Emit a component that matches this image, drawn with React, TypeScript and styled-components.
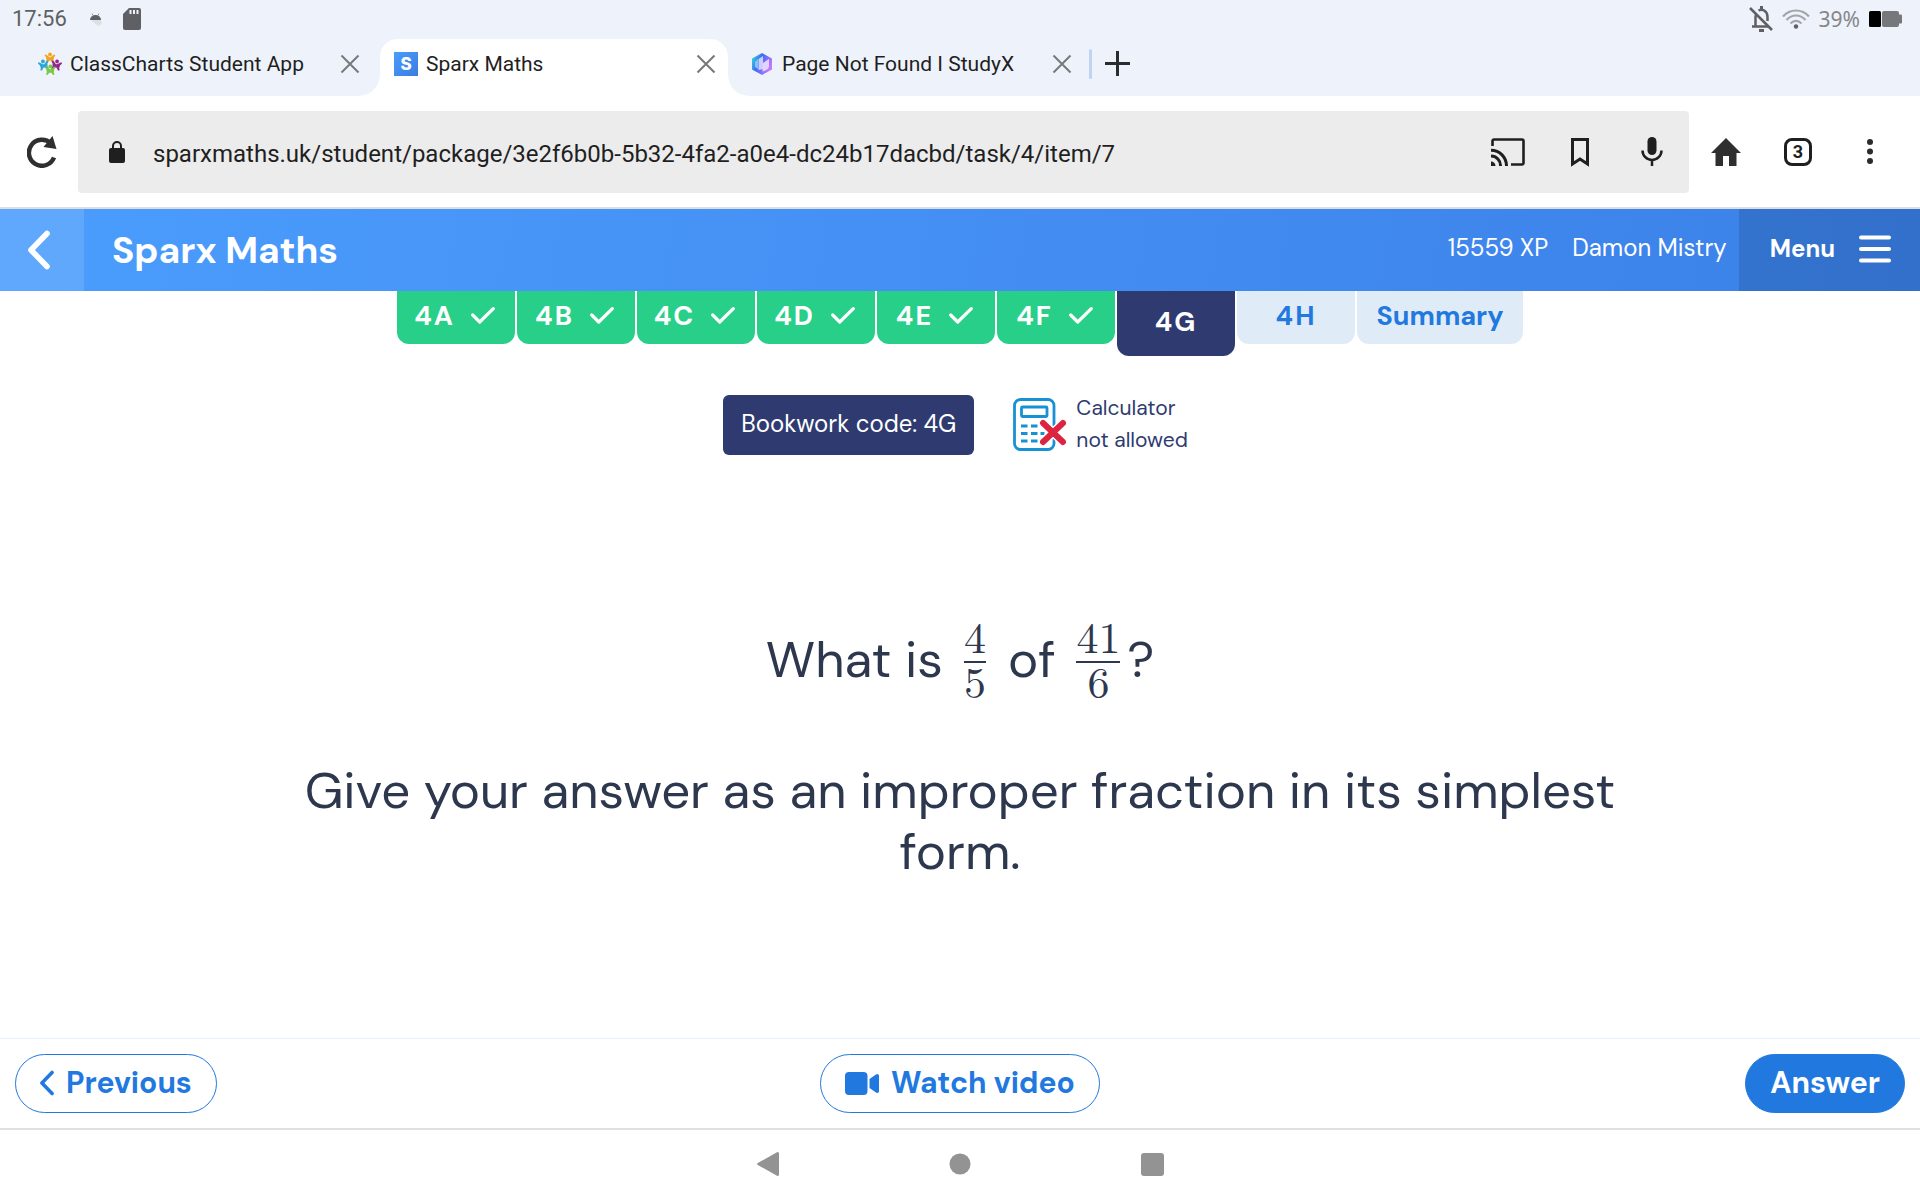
import React from "react";
import styled, { createGlobalStyle, css } from "styled-components";

const Global = createGlobalStyle`
  *, *::before, *::after { box-sizing: border-box; }
  body { margin: 0; background: #fff; }
  button, a, input { font: inherit; color: inherit; }
  button { border: 0; padding: 0; background: none; cursor: pointer; }
  a { text-decoration: none; }
  svg { display: block; flex: none; }
`;

const chromeFont = `Roboto, "Liberation Sans", sans-serif`;
const pageFont = `"DM Sans", Inter, "Liberation Sans", sans-serif`;

const Screen = styled.div`
  min-height: 100vh;
  display: flex;
  flex-direction: column;
  font-family: ${pageFont};
  color: #2d384e;
`;

/* ---------- system status and browser tabs ---------- */

const TopArea = styled.div`
  background: #eef3fb;
  font-family: ${chromeFont};
`;

const StatusBar = styled.div`
  height: 39px;
  display: flex;
  align-items: center;
  justify-content: space-between;
  padding: 0 18px 2px 12px;
  font-size: 22px;
  line-height: 24px;
  color: #5f6063;
`;

const StatusGroup = styled.div<{ $gap: number }>`
  display: flex;
  align-items: center;
  gap: ${(p) => p.$gap}px;
`;

const Percent = styled.span`
  font-family: "Noto Sans", sans-serif;
  font-size: 21px;
  color: #85868a;
`;

const TabStrip = styled.div`
  display: flex;
  height: 57px;
  padding-left: 24px;
`;

const TabList = styled.div`
  display: flex;
  gap: 8px;
`;

const BrowserTab = styled.div<{ $active?: boolean }>`
  position: relative;
  display: flex;
  align-items: center;
  gap: 8px;
  width: 348px;
  padding: 0 12px 8px 14px;
  font-size: 21px;
  line-height: 28px;
  color: #1f1f1f;
  ${(p) =>
    p.$active &&
    css`
      background: #fff;
      border-radius: 18px 18px 0 0;
      &::before,
      &::after {
        content: "";
        position: absolute;
        bottom: 0;
        width: 20px;
        height: 20px;
      }
      &::before {
        left: -20px;
        background: radial-gradient(circle at 0 0, transparent 19px, #fff 20px);
      }
      &::after {
        right: -20px;
        background: radial-gradient(circle at 100% 0, transparent 19px, #fff 20px);
      }
    `}
`;

const TabTitle = styled.button`
  flex: 1;
  text-align: left;
  white-space: nowrap;
`;

const NewTab = styled.div`
  display: flex;
  align-items: center;
  gap: 13px;
  padding: 0 0 8px 5px;
`;

const Divider = styled.span`
  width: 3px;
  height: 30px;
  border-radius: 2px;
  background: #bfd3f2;
`;

/* ---------- address bar ---------- */

const Toolbar = styled.div`
  display: flex;
  align-items: center;
  height: 113px;
  padding: 0 33px 0 27px;
  border-bottom: 2px solid #dedede;
  font-family: ${chromeFont};
  color: #1f1f1f;
`;

const AddressBox = styled.label`
  flex: 1;
  display: flex;
  align-items: center;
  height: 82px;
  margin: 0 20px 0 21px;
  padding: 0 20px 0 28px;
  border-radius: 4px;
  background: #ececec;
`;

const Address = styled.input`
  flex: 1;
  min-width: 0;
  margin-left: 23px;
  border: 0;
  outline: 0;
  padding: 4px 0 0;
  background: none;
  font-size: 24px;
  line-height: 32px;
`;

const IconRow = styled.div`
  display: flex;
  align-items: center;
  gap: 38px;
`;

const IconButton = styled.button`
  display: grid;
  place-items: center;
  width: 34px;
  height: 34px;
`;

const TabCount = styled.span`
  width: 28px;
  height: 28px;
  display: grid;
  place-items: center;
  border: 3px solid #1f1f1f;
  border-radius: 8px;
  font-size: 18px;
  line-height: 22px;
  font-weight: 700;
`;

/* ---------- site header ---------- */

const Header = styled.header`
  display: flex;
  align-items: stretch;
  height: 82px;
  background: linear-gradient(100deg, #4a9dfd 0%, #4590f4 45%, #3a80e8 100%);
  color: #fff;
`;

const BackButton = styled.button`
  width: 84px;
  display: grid;
  place-items: center;
  padding-right: 6px;
  background: rgba(255, 255, 255, 0.12);
`;

const Brand = styled.a`
  flex: 1;
  align-self: center;
  padding-left: 28px;
  font-size: 37px;
  line-height: 48px;
  font-weight: 700;
`;

const UserInfo = styled.div`
  display: flex;
  align-items: center;
  gap: 24px;
  padding: 0 12px 4px 0;
  font-size: 24px;
  line-height: 32px;
`;

const MenuButton = styled.button`
  display: flex;
  align-items: center;
  gap: 24px;
  padding: 0 29px 3px 31px;
  background: rgba(0, 0, 0, 0.12);
  font-size: 24px;
  line-height: 32px;
  font-weight: 700;
`;

/* ---------- task ---------- */

const TaskTabs = styled.nav`
  display: flex;
  justify-content: center;
  align-items: flex-start;
  gap: 2px;
`;

const tones = {
  done: css`background: #28cf89; color: #fff; padding-right: 3px;`,
  current: css`background: #2f3b70; color: #fff; height: 65px;`,
  todo: css`background: #dfebf7; color: #2179df;`,
};

const TaskTab = styled.button<{ $tone: keyof typeof tones; $wide?: boolean }>`
  display: flex;
  align-items: center;
  justify-content: center;
  gap: 16px;
  width: ${(p) => (p.$wide ? 166 : 118)}px;
  height: 53px;
  padding-bottom: 4px;
  border-radius: 0 0 12px 12px;
  font-size: 27px;
  line-height: 32px;
  font-weight: 700;
  letter-spacing: ${(p) => (p.$wide ? 0 : 2)}px;
  ${(p) => tones[p.$tone]}
`;

const TaskInfo = styled.div`
  display: flex;
  justify-content: center;
  align-items: center;
  gap: 39px;
  height: 60px;
  margin-top: 39px;
  padding-right: 9px;
`;

const Bookwork = styled.div`
  display: flex;
  align-items: center;
  height: 60px;
  padding: 0 18px 2px;
  border-radius: 6px;
  background: #2f3b70;
  color: #fff;
  font-size: 24px;
  line-height: 32px;
`;

const Calculator = styled.div`
  display: flex;
  align-items: center;
  gap: 10px;
  padding-bottom: 2px;
  color: #2f3b70;
  font-size: 21px;
  line-height: 32px;
`;

const Question = styled.main`
  flex: 1;
  display: flex;
  flex-direction: column;
  align-items: center;
  justify-content: center;
  gap: 58px;
  padding-top: 6px;
  text-align: center;
  font-size: 51px;
  line-height: 61px;
`;

const Prompt = styled.p`
  max-width: 1400px;
  margin: 0;
`;

const PromptRow = styled(Prompt)`
  display: flex;
  align-items: center;
`;

const Fraction = styled.span<{ $after: number }>`
  display: inline-flex;
  flex-direction: column;
  align-items: center;
  margin: 0 ${(p) => p.$after}px 6px 21px;
  font-family: KaTeX_Main, "Latin Modern Roman", "CMU Serif", "Liberation Serif", serif;
  font-size: 44px;
  line-height: 33px;
`;

const Numerator = styled.span`
  padding-bottom: 10px;
  border-bottom: 2px solid currentColor;
`;

/* ---------- footer ---------- */

const ActionBar = styled.footer`
  display: grid;
  grid-template-columns: 1fr auto 1fr;
  align-items: center;
  height: 92px;
  padding: 0 15px;
  border-top: 1px solid #e6f1fb;
  border-bottom: 2px solid #e0e0e0;
`;

const Action = styled.button<{ $primary?: boolean; $end?: boolean }>`
  display: flex;
  align-items: center;
  gap: 12px;
  height: 59px;
  padding: 0 24px 2px;
  justify-self: ${(p) => (p.$end ? "end" : "start")};
  border: 1px solid #2179df;
  border-radius: 30px;
  background: ${(p) => (p.$primary ? "#2179df" : "#fff")};
  color: ${(p) => (p.$primary ? "#fff" : "#2179df")};
  font-size: 30px;
  line-height: 40px;
  font-weight: 700;
`;

const SystemNav = styled.div`
  display: flex;
  align-items: center;
  justify-content: center;
  gap: 170px;
  height: 70px;
  padding-bottom: 2px;
  color: #939393;
`;

/* ---------- icons ---------- */

const CloseIcon = () => (
  <svg width="20" height="20" viewBox="0 0 20 20" stroke="#77787a" strokeWidth="2">
    <path d="M1.5 1.5l17 17M18.5 1.5l-17 17" />
  </svg>
);

const people: [number, number, number, string][] = [
  [12, 5, 0, "#f6a21d"],
  [5.5, 12, -12, "#2fa4d9"],
  [18.5, 12, 12, "#93278f"],
  [12.3, 17, 0, "#7ac943"],
];

const ClassChartsIcon = () => (
  <svg width="24" height="24" viewBox="0 0 24 24">
    {people.map(([x, y, r, c]) => (
      <g key={c} transform={`translate(${x} ${y}) rotate(${r})`} stroke={c} fill={c} strokeLinecap="round">
        <circle cx="0" cy="-2.6" r="1.9" stroke="none" />
        <path d="M-4.200 -1.500L-1 1.200v1L-3.200 5M4.200 -1.500L1 1.200v1L3.200 5M-1 1.200h2v1.500h-2z" strokeWidth="2" />
      </g>
    ))}
  </svg>
);

const SparxIcon = () => (
  <svg width="24" height="24" viewBox="0 0 24 24">
    <defs>
      <linearGradient id="sparx" x1="0" y1="0" x2="1" y2="1">
        <stop stopColor="#4a9dfd" />
        <stop offset="1" stopColor="#3a7ce0" />
      </linearGradient>
    </defs>
    <rect width="24" height="24" fill="url(#sparx)" />
    <text x="12" y="18" textAnchor="middle" fontFamily="Inter, sans-serif" fontWeight="800" fontSize="17" fill="#fff">S</text>
  </svg>
);

const StudyXIcon = () => (
  <svg width="24" height="22" viewBox="-2 0 24 22">
    <defs>
      <linearGradient id="hex" x1="0" y1="0" x2="1" y2="0.5">
        <stop stopColor="#2df0d0" />
        <stop offset="0.45" stopColor="#3f6bf5" />
        <stop offset="1" stopColor="#c07bff" />
      </linearGradient>
    </defs>
    <path d="M10 0l10 5.5v11L10 22 0 16.5v-11z" fill="url(#hex)" />
    <path d="M3 9l3-3v10l-3-2z" fill="#9fd0ff" opacity=".8" />
    <path d="M6.500 6L11 3v13l-4.500 1z" fill="#d5dcff" opacity=".9" />
    <path d="M11 10l6-4v7c0 3-3 4.500-6.500 5.500z" fill="#e9d8ff" opacity=".95" />
  </svg>
);

const PlusIcon = () => (
  <svg width="25" height="25" viewBox="0 0 25 25" stroke="#2b2c2e" strokeWidth="3">
    <path d="M12.5 0v25M0 12.5h25" />
  </svg>
);

const AndroidIcon = () => (
  <svg width="16" height="16" viewBox="0 0 16 16">
    <path d="M4 9l7 6 4-2-1.500-5z" fill="#dcdfe5" />
    <path d="M3 9a5.500 5 0 0 1 11 0z" fill="#5f6063" />
    <path d="M5 2.500l1 2M12 2.500l-1 2" stroke="#8f9196" />
  </svg>
);

const SdIcon = () => (
  <svg width="18" height="22" viewBox="0 0 18 22">
    <path d="M6 0h10a2 2 0 0 1 2 2v18a2 2 0 0 1-2 2H2a2 2 0 0 1-2-2V6z" fill="#5f6063" />
    <path d="M7.500 2v4M11 2v4M14.500 2v4" stroke="#eef3fb" strokeWidth="2" />
  </svg>
);

const BellOffIcon = () => (
  <svg width="24" height="26" viewBox="0 0 24 26" fill="none" stroke="#5f6063" strokeWidth="2.5">
    <path d="M1 2l22 22" />
    <path d="M3 20.500h16M6.500 20V11a6 6 0 0 1 1-3M9.500 4.500c4-2 9 .5 9 6.500v4" />
    <path d="M12.500 0v4M10 24.500h5" strokeWidth="3" />
  </svg>
);

const WifiIcon = () => (
  <svg width="28" height="20" viewBox="0 0 28 20" fill="none" stroke="#a3a5a9" strokeWidth="2.2">
    <path d="M1 7.500C8-.5 20-.5 27 7.500M4.500 11c5.500-6 13.500-6 19 0M8.500 14.500c3.500-3.500 7.500-3.500 11 0" />
    <circle cx="14" cy="17.5" r="2.2" fill="#5f6063" stroke="none" />
  </svg>
);

const BatteryIcon = () => (
  <svg width="33" height="16" viewBox="0 0 33 16">
    <rect x="13" width="17" height="16" rx="2" fill="#77787b" />
    <rect x="29" y="3.5" width="4" height="9" rx="1" fill="#77787b" />
    <rect width="12" height="16" rx="1.5" fill="#000" />
  </svg>
);

const ReloadIcon = () => (
  <svg width="30" height="32" viewBox="0 0 30 32">
    <path d="M27 21.500A13 13 0 1 1 24 7.500" fill="none" stroke="#2f2f2f" strokeWidth="4.5" />
    <path d="M25.500 0l4 13-13-2z" fill="#2f2f2f" />
  </svg>
);

const LockIcon = () => (
  <svg width="24" height="24" viewBox="0 0 24 24">
    <rect x="3" y="8" width="16" height="15" rx="2" fill="#1f1f1f" />
    <path d="M7 9V6a4 4 0 0 1 8 0v3" fill="none" stroke="#1f1f1f" strokeWidth="2" />
  </svg>
);

const CastIcon = () => (
  <svg width="34" height="28" viewBox="0 0 34 28" fill="none" stroke="#1f1f1f" strokeWidth="2.6">
    <path d="M1.500 8V3a1.500 1.500 0 0 1 1.500-1.500h28A1.500 1.500 0 0 1 32.500 3v22a1.500 1.500 0 0 1-1.500 1.500H20" />
    <path d="M0 12.300A15.500 15.500 0 0 1 15.500 28M0 18a9.500 9.500 0 0 1 9.500 10" strokeWidth="3" />
    <path d="M0 23.500a4.500 4.500 0 0 1 4.500 4.500H0z" fill="#1f1f1f" stroke="none" />
  </svg>
);

const BookmarkIcon = () => (
  <svg width="18" height="30" viewBox="0 0 18 30">
    <path d="M1.500 2.500h15v24.500L9 22l-7.500 5z" fill="none" stroke="#1f1f1f" strokeWidth="3" />
  </svg>
);

const MicIcon = () => (
  <svg width="22" height="29" viewBox="0 0 22 29" fill="none" stroke="#1f1f1f" strokeWidth="2.5">
    <rect x="6.500" y="0" width="9" height="18" rx="4.5" fill="#1f1f1f" stroke="none" />
    <path d="M1.500 13.500a9.500 9.500 0 0 0 19 0M11 23v6" />
  </svg>
);

const HomeIcon = () => (
  <svg width="30" height="28" viewBox="0 0 30 28">
    <path d="M15 0l15 15h-4.500v13H18V18h-6v10H4.500V15H0z" fill="#2f2f2f" />
  </svg>
);

const DotsIcon = () => (
  <svg width="6" height="25" viewBox="0 0 6 25" fill="#2b2b2b">
    <circle cx="3" cy="3" r="3" />
    <circle cx="3" cy="12.5" r="3" />
    <circle cx="3" cy="22" r="3" />
  </svg>
);

const Chevron = ({ width, height }: { width: number; height: number }) => (
  <svg width={width} height={height} viewBox="1 0 22 40" fill="none" stroke="currentColor" strokeWidth="5.6" strokeLinecap="round" strokeLinejoin="round">
    <path d="M20 3.500L4 20l16 16.500" />
  </svg>
);

const BurgerIcon = () => (
  <svg width="32" height="28" viewBox="0 0 32 28" stroke="#fff" strokeWidth="4" strokeLinecap="round">
    <path d="M2 2.500h28M2 14h28M2 25.500h28" />
  </svg>
);

const CheckIcon = () => (
  <svg width="24" height="17" viewBox="0 0 24 17" fill="none" stroke="currentColor" strokeWidth="3.2" strokeLinecap="round" strokeLinejoin="round">
    <path d="M1.700 8l7 7L22.300 1.700" />
  </svg>
);

const CalculatorIcon = () => (
  <svg width="53" height="53" viewBox="0 0 53 53" fill="none" stroke="#1791d3" strokeWidth="2.8">
    <rect x="1.5" y="1.5" width="39.5" height="50" rx="6" />
    <rect x="8.5" y="9" width="25.5" height="9.5" rx="1" />
    <path d="M8 28h6.500M18 28h6.500M8 35.500h6.500M18 35.500h6.500M27.500 35.500h4M8 43h6.500M18 43h6.500" />
    <path d="M30 25l20 19M50 25l-20 19" stroke="#fff" strokeWidth="9" strokeLinecap="round" />
    <path d="M30 25l20 19M50 25l-20 19" stroke="#dc2340" strokeWidth="6" strokeLinecap="round" />
  </svg>
);

const VideoIcon = () => (
  <svg width="34" height="24" viewBox="0 0 34 24" fill="currentColor">
    <rect x="0" y="1" width="22.5" height="23" rx="4" />
    <path d="M24.500 8l6.500-4.500a1.800 1.800 0 0 1 3 1.400v15.200a1.800 1.800 0 0 1-3 1.400L24.500 17z" />
  </svg>
);

const BackTriangle = () => (
  <svg width="22" height="24" viewBox="0 0 22 24" fill="currentColor">
    <path d="M20 .3L.8 11a1.200 1.200 0 0 0 0 2L20 23.700a1.300 1.300 0 0 0 2-1V1.300a1.300 1.300 0 0 0-2-1z" />
  </svg>
);

const HomeCircle = () => (
  <svg width="22" height="22" viewBox="0 0 22 22">
    <circle cx="11" cy="11" r="10.5" fill="currentColor" />
  </svg>
);

const RecentSquare = () => (
  <svg width="23" height="23" viewBox="0 0 23 23">
    <rect width="23" height="23" rx="3" fill="currentColor" />
  </svg>
);

const browserTabs = [
  { title: "ClassCharts Student App", icon: <ClassChartsIcon /> },
  { title: "Sparx Maths", icon: <SparxIcon />, active: true },
  { title: "Page Not Found I StudyX", icon: <StudyXIcon /> },
];

const steps = ["4A", "4B", "4C", "4D", "4E", "4F"];

export default function App() {
  return (
    <Screen>
      <Global />
      <TopArea>
        <StatusBar>
          <StatusGroup $gap={20}>
            <span>17:56</span>
            <AndroidIcon />
            <SdIcon />
          </StatusGroup>
          <StatusGroup $gap={9}>
            <BellOffIcon />
            <WifiIcon />
            <Percent>39%</Percent>
            <BatteryIcon />
          </StatusGroup>
        </StatusBar>
        <TabStrip>
          <TabList>
            {browserTabs.map((t) => (
              <BrowserTab key={t.title} $active={t.active}>
                {t.icon}
                <TabTitle>{t.title}</TabTitle>
                <button aria-label={`Close ${t.title}`}><CloseIcon /></button>
              </BrowserTab>
            ))}
          </TabList>
          <NewTab>
            <Divider />
            <button aria-label="New tab"><PlusIcon /></button>
          </NewTab>
        </TabStrip>
      </TopArea>

      <Toolbar>
        <button aria-label="Reload"><ReloadIcon /></button>
        <AddressBox>
          <LockIcon />
          <Address
            aria-label="Address"
            defaultValue="sparxmaths.uk/student/package/3e2f6b0b-5b32-4fa2-a0e4-dc24b17dacbd/task/4/item/7"
          />
          <IconRow>
            <IconButton aria-label="Cast"><CastIcon /></IconButton>
            <IconButton aria-label="Bookmark"><BookmarkIcon /></IconButton>
            <IconButton aria-label="Voice search"><MicIcon /></IconButton>
          </IconRow>
        </AddressBox>
        <IconRow>
          <IconButton aria-label="Home"><HomeIcon /></IconButton>
          <IconButton aria-label="Open tabs"><TabCount>3</TabCount></IconButton>
          <IconButton aria-label="More"><DotsIcon /></IconButton>
        </IconRow>
      </Toolbar>

      <Header>
        <BackButton aria-label="Back"><Chevron width={22} height={40} /></BackButton>
        <Brand href="#">Sparx Maths</Brand>
        <UserInfo>
          <span>15559 XP</span>
          <span>Damon Mistry</span>
        </UserInfo>
        <MenuButton>Menu<BurgerIcon /></MenuButton>
      </Header>

      <TaskTabs>
        {steps.map((s) => (
          <TaskTab key={s} $tone="done">{s}<CheckIcon /></TaskTab>
        ))}
        <TaskTab $tone="current">4G</TaskTab>
        <TaskTab $tone="todo">4H</TaskTab>
        <TaskTab $tone="todo" $wide>Summary</TaskTab>
      </TaskTabs>

      <TaskInfo>
        <Bookwork>Bookwork code: 4G</Bookwork>
        <Calculator>
          <CalculatorIcon />
          <span>Calculator<br />not allowed</span>
        </Calculator>
      </TaskInfo>

      <Question>
        <PromptRow>
          What is
          <Fraction $after={22}><Numerator>4</Numerator><span>5</span></Fraction>
          of
          <Fraction $after={7}><Numerator>41</Numerator><span>6</span></Fraction>
          ?
        </PromptRow>
        <Prompt>Give your answer as an improper fraction in its simplest form.</Prompt>
      </Question>

      <ActionBar>
        <Action><Chevron width={14} height={26} />Previous</Action>
        <Action><VideoIcon />Watch video</Action>
        <Action $primary $end>Answer</Action>
      </ActionBar>

      <SystemNav>
        <button aria-label="System back"><BackTriangle /></button>
        <button aria-label="System home"><HomeCircle /></button>
        <button aria-label="Recent apps"><RecentSquare /></button>
      </SystemNav>
    </Screen>
  );
}
